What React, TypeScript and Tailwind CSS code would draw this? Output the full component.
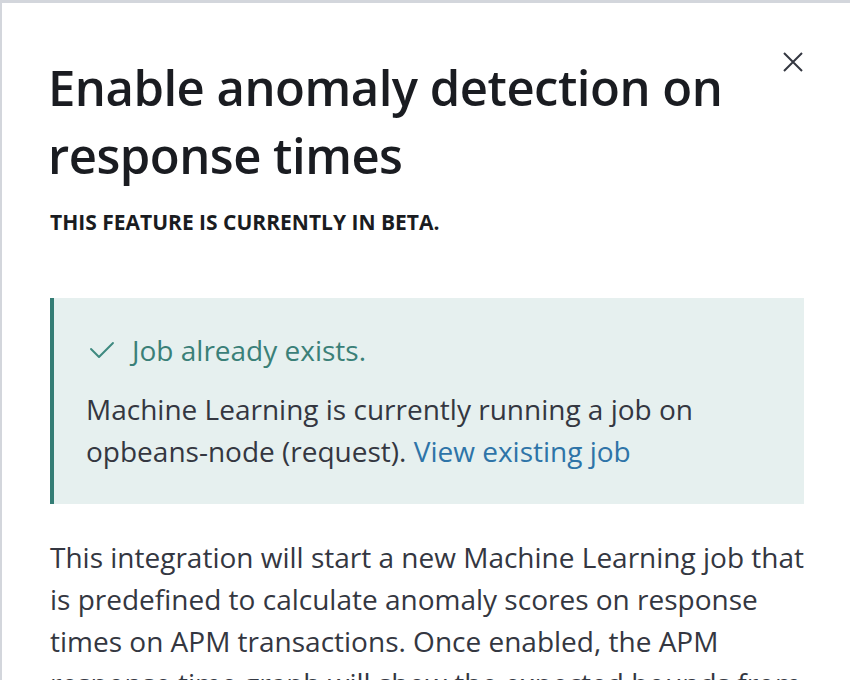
const font = { fontFamily: '"Open Sans", "Noto Sans", sans-serif' };

function CheckIcon() {
  return (
    <svg width="32" height="32" viewBox="0 0 16 16" className="shrink-0 text-[#3f8a80]" fill="currentColor">
      <path d="M6.5 12a.502.502 0 01-.354-.146l-4-4a.502.502 0 01.708-.708L6.5 10.793l6.646-6.647a.502.502 0 01.708.708l-7 7A.502.502 0 016.5 12" />
    </svg>
  );
}

function CloseIcon() {
  return (
    <svg width="22" height="22" viewBox="0 0 22 22" className="text-[#343741]" stroke="currentColor" strokeWidth="2">
      <path d="M2 2l18 18M20 2L2 20" />
    </svg>
  );
}

export default function App() {
  return (
    <div className="w-[850px] h-[680px] overflow-hidden bg-white border-t-[3px] border-l-2 border-[#d3d6dc]" style={font}>
      <div className="relative pl-12 pr-[46px] pt-[50px]">
        <button className="absolute right-[46px] top-[48px] p-0">
          <CloseIcon />
        </button>
        <h1 className="-ml-[2px] text-[49px] leading-[68px] font-semibold text-[#1a1c21] tracking-[-0.5px]">
          Enable anomaly detection on response times
        </h1>
        <p className="mt-[19px] text-[21px] leading-[28px] font-bold text-[#1a1c21] uppercase">
          This feature is currently in beta.
        </p>

        <div className="mt-[62px] bg-[#e6f0ef] border-l-4 border-[#347d75] px-8 py-8">
          <div className="flex items-center gap-[14px] h-10">
            <CheckIcon />
            <span className="text-[28px] leading-10 text-[#3a8078]">Job already exists.</span>
          </div>
          <p className="mt-[18px] text-[28px] leading-[42px] text-[#343741]">
            Machine Learning is currently running a job on opbeans-node (request).{" "}
            <a href="#" className="text-[#2e74a8]">View existing job</a>
          </p>
        </div>

        <p className="mt-8 -mr-1 text-[28px] leading-[42px] text-[#343741]">
          This integration will start a new Machine Learning job that is predefined to calculate anomaly scores on
          response times on APM transactions. Once enabled, the APM response time graph will show the expected bounds
          from the Machine Learning job and annotate the graph once the anomaly score is &gt;=75.
        </p>
      </div>
    </div>
  );
}
